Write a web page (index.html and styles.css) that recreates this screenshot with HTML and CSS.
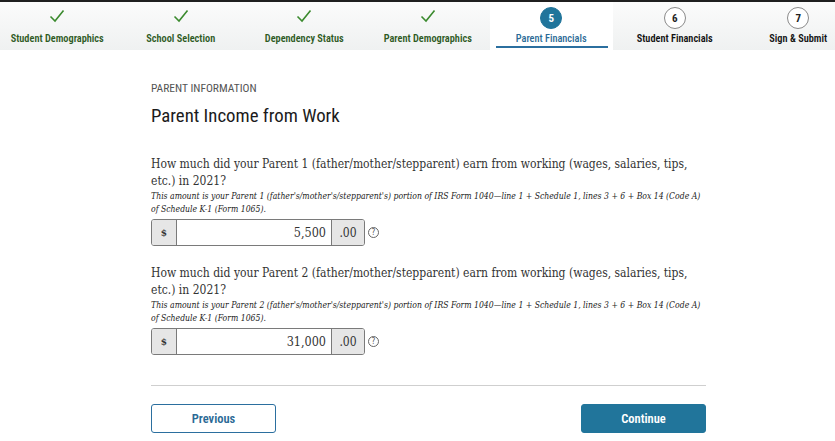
FILE: index.html
```html
<!DOCTYPE html>
<html lang="en">
<head>
<meta charset="utf-8">
<title>Parent Income from Work</title>
<link rel="stylesheet" href="styles.css">
</head>
<body>
<div class="topline"></div>
<nav class="steps">
  <div class="step done">
    <svg class="check" viewBox="0 0 16 14" width="16" height="14"><path d="M1.5 7.5 L6 12 L14.5 1.5" fill="none" stroke="#3b8a2e" stroke-width="1.6"/></svg>
    <span class="label">Student Demographics</span>
  </div>
  <div class="step done">
    <svg class="check" viewBox="0 0 16 14" width="16" height="14"><path d="M1.5 7.5 L6 12 L14.5 1.5" fill="none" stroke="#3b8a2e" stroke-width="1.6"/></svg>
    <span class="label">School Selection</span>
  </div>
  <div class="step done">
    <svg class="check" viewBox="0 0 16 14" width="16" height="14"><path d="M1.5 7.5 L6 12 L14.5 1.5" fill="none" stroke="#3b8a2e" stroke-width="1.6"/></svg>
    <span class="label">Dependency Status</span>
  </div>
  <div class="step done">
    <svg class="check" viewBox="0 0 16 14" width="16" height="14"><path d="M1.5 7.5 L6 12 L14.5 1.5" fill="none" stroke="#3b8a2e" stroke-width="1.6"/></svg>
    <span class="label">Parent Demographics</span>
  </div>
  <div class="step active">
    <span class="num">5</span>
    <span class="label">Parent Financials</span>
  </div>
  <div class="step">
    <span class="num">6</span>
    <span class="label">Student Financials</span>
  </div>
  <div class="step">
    <span class="num">7</span>
    <span class="label">Sign &amp; Submit</span>
  </div>
</nav>

<main class="content">
  <div class="eyebrow">PARENT INFORMATION</div>
  <h1 class="title">Parent Income from Work</h1>

  <div class="field first">
    <p class="question">How much did your Parent 1 (father/mother/stepparent) earn from working (wages, salaries, tips, etc.) in 2021?</p>
    <p class="hint">This amount is your Parent 1 (father's/mother's/stepparent's) portion of IRS Form 1040—line 1 + Schedule 1, lines 3 + 6 + Box 14 (Code A) of Schedule K-1 (Form 1065).</p>
    <div class="inputrow">
      <div class="group">
        <span class="addon dollar">$</span>
        <span class="amount">5,500</span>
        <span class="addon cents">.00</span>
      </div>
      <span class="help">?</span>
    </div>
  </div>

  <div class="field second">
    <p class="question">How much did your Parent 2 (father/mother/stepparent) earn from working (wages, salaries, tips, etc.) in 2021?</p>
    <p class="hint">This amount is your Parent 2 (father's/mother's/stepparent's) portion of IRS Form 1040—line 1 + Schedule 1, lines 3 + 6 + Box 14 (Code A) of Schedule K-1 (Form 1065).</p>
    <div class="inputrow">
      <div class="group">
        <span class="addon dollar">$</span>
        <span class="amount">31,000</span>
        <span class="addon cents">.00</span>
      </div>
      <span class="help">?</span>
    </div>
  </div>

  <hr class="divider">

  <div class="actions">
    <button class="btn prev">Previous</button>
    <button class="btn next">Continue</button>
  </div>
</main>
</body>
</html>
```

FILE: styles.css
```css
* { box-sizing: border-box; }
html, body { margin: 0; padding: 0; background: #fff; }
body {
  font-family: Roboto, "DejaVu Sans", sans-serif;
  font-stretch: 75%;
  color: #1b1b1b;
}
.topline { height: 2px; background: #1f1f1f; }

.steps {
  display: grid;
  grid-template-columns: repeat(7, 123.5px);
  margin-left: -4.5px;
  height: 48px;
  background: linear-gradient(#fbfbfb, #eff1f1);
}
.step {
  display: flex;
  flex-direction: column;
  align-items: center;
  padding-top: 5px;
  position: relative;
}
.step .check { margin-top: 2px; margin-bottom: 9px; }
.step .num {
  width: 22px; height: 22px;
  border-radius: 50%;
  border: 1px solid #8a8a8a;
  background: #fff;
  display: flex; align-items: center; justify-content: center;
  font-size: 11px; font-weight: bold; color: #222;
  margin-bottom: 3px;
}
.step .label {
  font-size: 10.3px;
  font-weight: 600;
  color: #111;
  white-space: nowrap;
}
.step.done .label { color: #2e5a1f; }
.step.active { background: #fff; }
.step.active .num { background: #21759b; border-color: #21759b; color: #fff; }
.step.active .label { color: #2b6a96; font-weight: 500; }
.step.active::after {
  content: "";
  position: absolute;
  left: 6px; right: 5px; bottom: 2px;
  height: 2px;
  background: #2b6f9f;
}

.content {
  width: 555px;
  margin: 0 0 0 151px;
  padding-top: 31px;
}
.eyebrow {
  font-size: 11.5px;
  color: #555;
  line-height: 14px;
}
.title {
  margin: 9px 0 0;
  font-size: 18.8px;
  font-weight: normal;
  color: #1b1b1b;
  line-height: 24px;
}
.field.first { margin-top: 28px; }
.field.second { margin-top: 19px; }
.question {
  margin: 0;
  font-family: "DejaVu Serif", serif;
  font-stretch: condensed;
  font-size: 12px;
  line-height: 17px;
  color: #333;
}
.hint {
  margin: 0;
  font-family: "DejaVu Serif", serif;
  font-style: italic;
  font-stretch: condensed;
  font-size: 8.6px;
  line-height: 13px;
  color: #222;
}
.inputrow {
  display: flex;
  align-items: center;
  margin-top: 3px;
}
.group {
  display: flex;
  height: 27px;
  border: 1px solid #7a7a7a;
  border-radius: 3px;
  overflow: hidden;
}
.addon {
  background: #e6e6e6;
  display: flex; align-items: center; justify-content: center;
  font-family: "DejaVu Serif", serif;
  color: #333;
}
.dollar { width: 25px; border-right: 1px solid #7a7a7a; font-size: 10px; font-weight: bold; }
.cents { width: 33px; border-left: 1px solid #7a7a7a; font-size: 12px; }
.amount {
  width: 154px;
  display: flex; align-items: center; justify-content: flex-end;
  padding-right: 5px;
  font-family: "DejaVu Serif", serif;
  font-stretch: condensed;
  font-size: 12.5px;
  color: #333;
}
.help {
  margin-left: 3px;
  width: 11px; height: 11px;
  border: 1px solid #666;
  border-radius: 50%;
  font-family: "DejaVu Sans", sans-serif;
  font-size: 8px;
  color: #555;
  display: flex; align-items: center; justify-content: center;
  line-height: 1;
}

.divider {
  margin: 30px 0 0;
  border: 0;
  border-top: 1px solid #cfcfcf;
}
.actions {
  display: flex;
  justify-content: space-between;
  margin-top: 18px;
}
.btn {
  width: 125px;
  height: 29px;
  border-radius: 3px;
  font-family: Roboto, "DejaVu Sans", sans-serif;
  font-stretch: 75%;
  font-size: 12.5px;
  font-weight: 600;
}
.prev { background: #fff; border: 1px solid #2b6f9f; color: #2b6a96; }
.next { background: #21759b; border: 1px solid #21759b; color: #fff; }
```
